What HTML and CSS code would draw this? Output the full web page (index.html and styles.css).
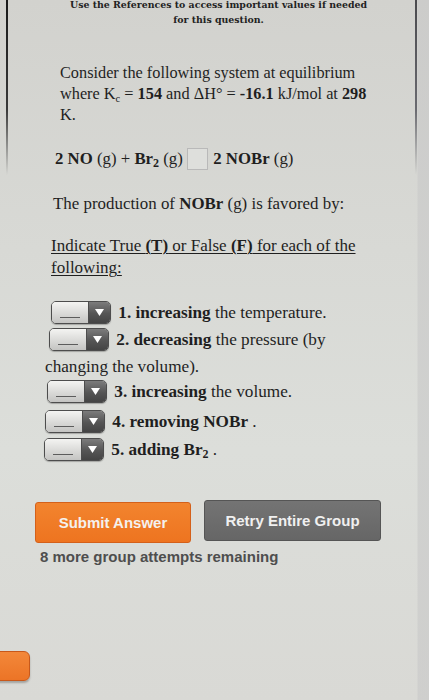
FILE: index.html
```html
<!DOCTYPE html>
<html>
<head>
<meta charset="utf-8">
<link rel="stylesheet" href="styles.css">
</head>
<body>
<div class="page">
  <div class="refs">Use the References to access important values if needed<br>for this question.</div>

  <p class="para p1">Consider the following system at equilibrium where K<sub class="sub">c</sub> = <b>154</b> and &Delta;H&deg; = <b>-16.1</b> kJ/mol at <b>298</b> K.</p>

  <p class="para eq"><b>2 NO</b> (g) + <b>Br<sub class="sub2">2</sub></b> (g) <span class="arrowbox"></span> <b>2 NOBr</b> (g)</p>

  <p class="para prod">The production of <b>NOBr</b> (g) is favored by:</p>

  <p class="para ind"><u>Indicate True <b>(T)</b> or False <b>(F)</b> for each of the following:</u></p>

  <div class="items">
    <div class="item i1"><span class="dd"><span class="dd-val"><span class="blank"></span></span><span class="dd-btn"><svg width="9" height="7" viewBox="0 0 9 7"><polygon points="0,0 9,0 4.5,7" fill="#fff"/></svg></span></span> <b>1. increasing</b> the temperature.</div>
    <div class="item i2"><span class="dd"><span class="dd-val"><span class="blank"></span></span><span class="dd-btn"><svg width="9" height="7" viewBox="0 0 9 7"><polygon points="0,0 9,0 4.5,7" fill="#fff"/></svg></span></span> <b>2. decreasing</b> the pressure (by changing the volume).</div>
    <div class="item i3"><span class="dd"><span class="dd-val"><span class="blank"></span></span><span class="dd-btn"><svg width="9" height="7" viewBox="0 0 9 7"><polygon points="0,0 9,0 4.5,7" fill="#fff"/></svg></span></span> <b>3. increasing</b> the volume.</div>
    <div class="item i4"><span class="dd"><span class="dd-val"><span class="blank"></span></span><span class="dd-btn"><svg width="9" height="7" viewBox="0 0 9 7"><polygon points="0,0 9,0 4.5,7" fill="#fff"/></svg></span></span> <b>4. removing NOBr</b> .</div>
    <div class="item i5"><span class="dd"><span class="dd-val"><span class="blank"></span></span><span class="dd-btn"><svg width="9" height="7" viewBox="0 0 9 7"><polygon points="0,0 9,0 4.5,7" fill="#fff"/></svg></span></span> <b>5. adding Br<sub class="sub2">2</sub></b> .</div>
  </div>

  <div class="buttons">
    <button class="btn submit">Submit Answer</button>
    <button class="btn retry">Retry Entire Group</button>
  </div>
  <div class="remaining">8 more group attempts remaining</div>

  <div class="bottom"><button class="btn stub"></button></div>
</div>
</body>
</html>
```

FILE: styles.css
```css
html, body {
  margin: 0;
  padding: 0;
}
body {
  width: 429px;
  height: 700px;
  overflow: hidden;
  color: #1f1f1f;
  font-family: "Liberation Serif", "Times New Roman", serif;
  background:
    linear-gradient(to bottom, #1a1a1a 0, #3a3a3a 110px, rgba(60,60,60,0) 175px) no-repeat 6px 0 / 2px 175px,
    linear-gradient(to bottom, #4a4a4e 0, #6a6a70 110px, rgba(110,110,115,0) 175px) no-repeat 415px 0 / 2px 175px,
    linear-gradient(to right, rgba(0,0,0,0) 0, rgba(0,0,0,0) 417px, rgba(200,200,200,0.6) 418px) no-repeat 0 0 / 429px 700px,
    linear-gradient(to bottom, #d2d2ce 0, #d8d9d5 250px, #dcdeda 450px, #d9d9d5 700px);
}
.page {
  position: relative;
}
.refs {
  font-family: "DejaVu Serif", serif;
  font-weight: bold;
  font-size: 9.4px;
  line-height: 15px;
  text-align: center;
  margin-top: -3px;
  padding-left: 8px;
  color: #222;
}
.para {
  margin: 0;
}
.p1 {
  font-size: 16.3px;
  margin-top: 35px;
  margin-left: 60px;
  margin-right: 50px;
  line-height: 21px;
}
.sub {
  font-size: 10.5px;
  vertical-align: -3px;
  line-height: 0;
}
.sub2 {
  font-size: 12px;
  vertical-align: -3px;
  line-height: 0;
}
.eq {
  font-size: 16.8px;
  margin-top: 23px;
  margin-left: 55px;
  line-height: 20px;
}
.arrowbox {
  display: inline-block;
  width: 19px;
  height: 20px;
  border: 1px solid #b9b9b9;
  background: #dedfdc;
  vertical-align: -6px;
  margin: 0 1px 0 0;
}
.prod {
  font-size: 16.9px;
  margin-top: 24px;
  margin-left: 53px;
  line-height: 20px;
}
.ind {
  font-size: 17px;
  margin-top: 21px;
  margin-left: 51px;
  margin-right: 60px;
  line-height: 22px;
}
.ind u {
  text-decoration-thickness: 1px;
  text-underline-offset: 2px;
}
.items {
  margin-top: 20px;
  font-size: 17.2px;
}
.item {
  line-height: 27px;
  margin-right: 60px;
}
.i1 { margin-left: 51px; }
.i2 { margin-left: 45px; text-indent: 4px; margin-right: 90px; }
.i3 { margin-left: 47px; margin-top: -2px; }
.i4 { margin-left: 45px; margin-top: 3px; }
.i5 { margin-left: 44px; margin-top: 1px; }
.dd {
  display: inline-flex;
  width: 58px;
  height: 21px;
  border: 1px solid #4d4d4d;
  border-radius: 5px;
  overflow: hidden;
  vertical-align: middle;
  margin-right: 3px;
  margin-top: -3px;
  text-indent: 0;
  box-shadow: 0 1px 1px rgba(0,0,0,0.25);
}
.dd-val {
  flex: 1;
  background: linear-gradient(to bottom, #f4f4f2 0, #dcdcda 50%, #c4c4c2 100%);
  display: flex;
  align-items: flex-end;
  justify-content: center;
  padding-bottom: 5px;
}
.blank {
  width: 20px;
  border-bottom: 1px solid #5c5c5c;
}
.dd-btn {
  width: 21px;
  border-left: 1px solid #4d4d4d;
  background: linear-gradient(to bottom, #7c7c7c 0, #555 55%, #444 100%);
  display: flex;
  align-items: center;
  justify-content: center;
}
.dd-btn svg {
  display: block;
}
.buttons {
  margin-top: 37px;
  margin-left: 35px;
  display: flex;
  align-items: flex-start;
  gap: 13px;
}
.btn {
  font-family: "Liberation Sans", Arial, sans-serif;
  font-weight: bold;
  font-size: 15px;
  color: #f4f1ee;
  border-radius: 3px;
  padding: 0;
  cursor: pointer;
}
.submit {
  width: 156px;
  height: 41px;
  margin-top: 2px;
  background: linear-gradient(to bottom, #f2842e 0, #ee7420 100%);
  border: 1px solid #d4601a;
}
.retry {
  width: 177px;
  height: 41px;
  background: linear-gradient(to bottom, #747474 0, #666 100%);
  border: 1px solid #555;
  color: #f0f0f0;
}
.remaining {
  margin-top: 4px;
  margin-left: 40px;
  font-family: "Liberation Sans", Arial, sans-serif;
  font-weight: bold;
  font-size: 15px;
  line-height: 20px;
  color: #4e4e4e;
}
.bottom {
  margin-top: 84px;
}
.stub {
  display: block;
  width: 40px;
  height: 30px;
  margin-left: -10px;
  border-radius: 6px;
  background: linear-gradient(to bottom, #f3883a 0, #ec7426 100%);
  border: 1px solid #c8581a;
  box-shadow: 0 2px 2px rgba(0,0,0,0.25);
}
```
